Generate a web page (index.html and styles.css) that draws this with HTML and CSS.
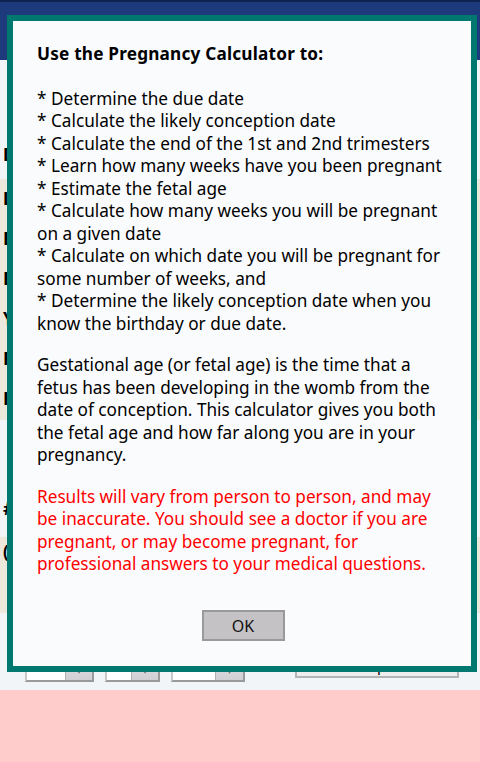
FILE: index.html
```html
<html>

<head>
    <meta charset="utf-8">
    <link rel="stylesheet" href="styles.css">
</head>

<body>
    <div class="page">
        <header class="topbar"></header>
        <section class="band light first">
            <p class="label">Due date</p>
        </section>
        <section class="band beige rows">
            <p class="label">LMP date</p>
            <p class="label">Estimated conception</p>
            <p class="label">End of 1st trimester</p>
            <p class="label">You are pregnant for</p>
            <p class="label">Fetal age</p>
            <p class="label">How far along</p>
        </section>
        <section class="band light third">
            <p class="label"># of weeks</p>
        </section>
        <section class="band beige fourth">
            <p class="label">(or pick a date)</p>
        </section>
        <section class="band light controls">
            <div class="select wide"><span class="field"></span><span class="arrow">&#9662;</span></div>
            <div class="select narrow"><span class="field"></span><span class="arrow">&#9662;</span></div>
            <div class="select mid"><span class="field"></span><span class="arrow">&#9662;</span></div>
            <div class="calc">Compute</div>
        </section>
        <footer class="pink"></footer>
    </div>

    <div class="dialog">
        <div class="message">
            <p class="title">Use the Pregnancy Calculator to:</p>
            <p>
                * Determine the due date<br>
                * Calculate the likely conception date<br>
                * Calculate the end of the 1st and 2nd trimesters<br>
                * Learn how many weeks have you been pregnant<br>
                * Estimate the fetal age<br>
                * Calculate how many weeks you will be pregnant on a given date<br>
                * Calculate on which date you will be pregnant for some number of weeks, and<br>
                * Determine the likely conception date when you know the birthday or due date.
            </p>
            <p>
                Gestational age (or fetal age) is the time that a fetus has been developing in the womb from the
                date of conception. This calculator gives you both the fetal age and how far along you are in your
                pregnancy.
            </p>
            <p class="warning">
                Results will vary from person to person, and may be inaccurate. You should see a doctor if you are
                pregnant, or may become pregnant, for professional answers to your medical questions.
            </p>
        </div>
        <div class="buttons">
            <button class="ok">OK</button>
        </div>
    </div>
</body>

</html>
```

FILE: styles.css
```css
html {
    background-color: #f2f5f8;
}

body {
    margin: 0;
    width: 480px;
    height: 762px;
    overflow: hidden;
    font-family: "Noto Sans", "DejaVu Sans", sans-serif;
    font-size: 17.2px;
    color: #000;
}

.page {
    display: flex;
    flex-direction: column;
    height: 762px;
}

.topbar {
    height: 60px;
    box-sizing: border-box;
    border-top: 2px solid #0f2150;
    background-color: #1c3a7c;
}

.band {
    display: flex;
    flex-direction: column;
    padding-left: 3px;
    box-sizing: border-box;
}

.light {
    background-color: #f2f5f8;
}

.beige {
    background-color: #ece8dc;
}

.label {
    margin: 0;
    height: 40px;
    line-height: 40px;
    font-size: 17px;
    font-weight: bold;
    white-space: nowrap;
}

.first {
    height: 119px;
    justify-content: flex-end;
    padding-bottom: 4px;
}

.rows {
    height: 241px;
}

.third {
    height: 117px;
    justify-content: flex-end;
    padding-bottom: 8px;
}

.fourth {
    height: 76px;
}

.fourth .label {
    height: 30px;
    line-height: 30px;
}

.controls {
    height: 77px;
    flex-direction: row;
    align-items: flex-start;
    padding: 41px 0 0 25px;
    gap: 11px;
}

.select {
    display: flex;
    height: 28px;
    box-sizing: border-box;
    border: 2px solid #9a9a9a;
    border-top-color: #c8c8c8;
    border-left-color: #c8c8c8;
}

.select .field {
    background-color: #fff;
}

.select .arrow {
    background: linear-gradient(#e4e4e8, #cfcfd4);
    border-left: 1px solid #b0b0b0;
    color: #777;
    font-size: 9px;
    text-align: center;
    line-height: 30px;
}

.wide .field { width: 38px; }
.wide .arrow { width: 26px; }
.narrow .field { width: 24px; }
.narrow .arrow { width: 26px; }
.mid .field { width: 42px; }
.mid .arrow { width: 27px; }

.calc {
    margin-top: -11px;
    margin-left: 39px;
    width: 164px;
    height: 35px;
    box-sizing: border-box;
    border: 2px solid #b4b4b4;
    background-color: #eeeeee;
    font-size: 15px;
    line-height: 20px;
    display: flex;
    align-items: flex-end;
    justify-content: center;
    padding-bottom: 1px;
}

.pink {
    flex: 1;
    background-color: #ffcccc;
}

/* popup over the form */
.dialog {
    position: absolute;
    left: 7px;
    top: 15px;
    width: 470px;
    height: 657px;
    box-sizing: border-box;
    border: 6px solid #00786f;
    background-color: #fafbfd;
    display: flex;
    flex-direction: column;
    padding: 22px 22px 25px 24px;
}

.message p {
    margin: 19px 0 0 0;
    line-height: 22.5px;
}

.message .title {
    margin: 0 0 22px 0;
    font-weight: bold;
    letter-spacing: 0.2px;
}

.message .warning {
    color: #ff0000;
}

.buttons {
    margin-top: auto;
    display: flex;
    justify-content: center;
}

.ok {
    width: 83px;
    height: 31px;
    border: 2px solid #999;
    background-color: #c4c2c5;
    font-family: "Noto Sans", "DejaVu Sans", sans-serif;
    font-size: 16px;
    color: #111;
    padding: 0;
}
```
